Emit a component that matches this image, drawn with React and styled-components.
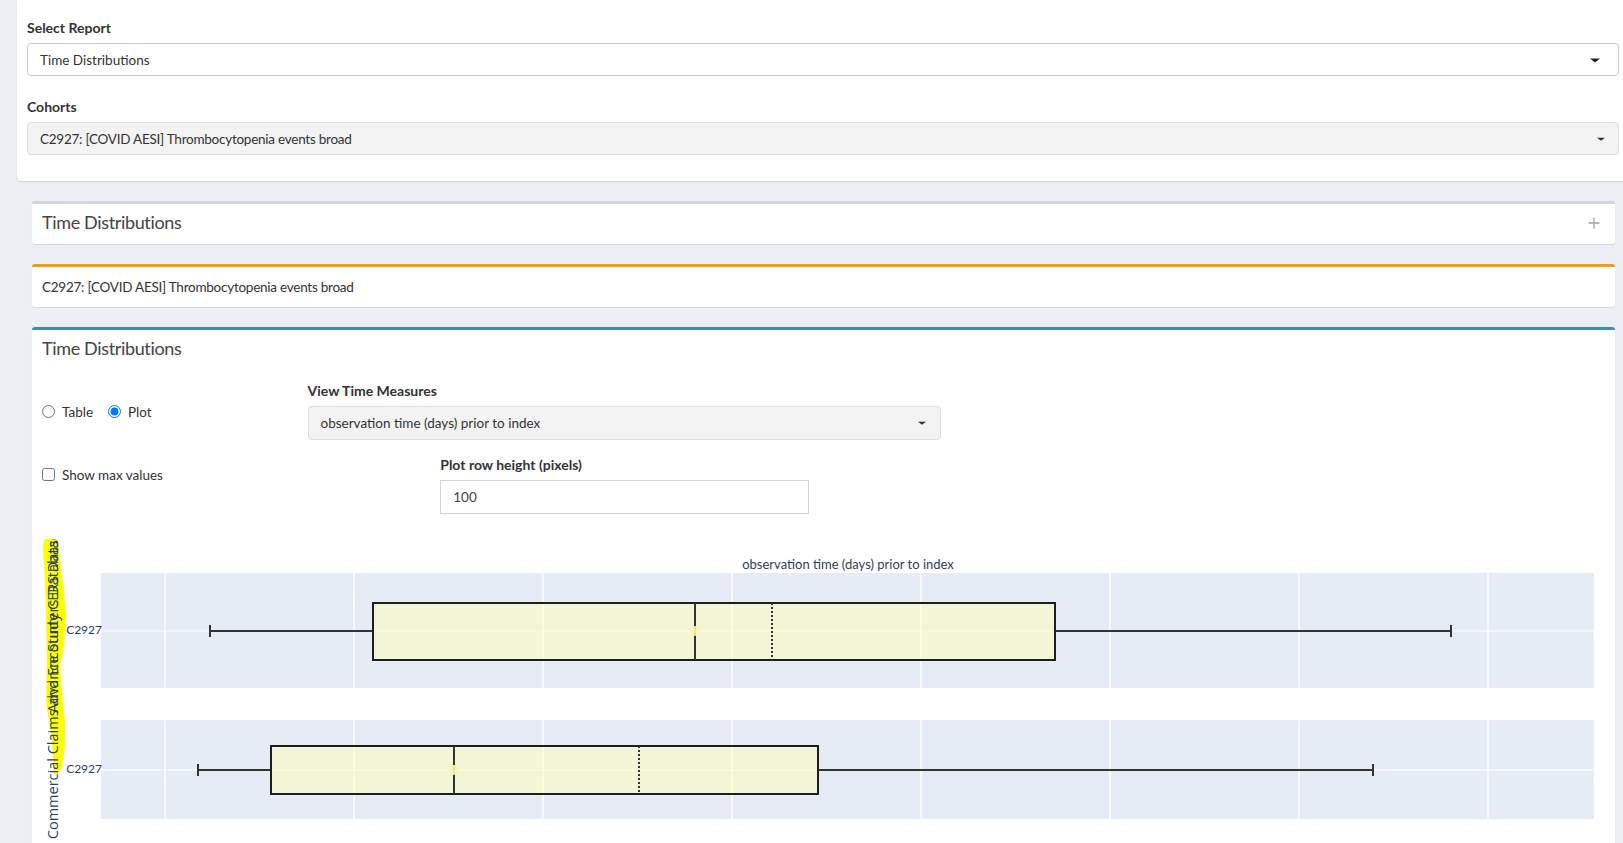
import React from 'react';
import styled, { createGlobalStyle } from 'styled-components';

const GlobalStyle = createGlobalStyle`
  html, body {
    margin: 0;
    padding: 0;
    background: #ecf0f5;
    font-family: Lato, "Source Sans Pro", "Liberation Sans", sans-serif;
    font-size: 13.5px;
    color: #333;
    overflow: hidden;
  }
  #root {
    height: 843px;
    overflow: hidden;
  }
  * { box-sizing: border-box; }
`;

const FilterPanel = styled.section`
  margin-left: 17px;
  padding: 18px 4px 26px 10px;
  background: #fff;
  border-bottom-left-radius: 4px;
  box-shadow: 0 1px 1px rgba(0, 0, 0, 0.12);
`;

const FormGroup = styled.div`
  margin-bottom: ${(p) => p.$gap ?? 0}px;
`;

const Label = styled.div`
  font-size: 14px;
  font-weight: 700;
  line-height: 20px;
  margin-bottom: 5px;
  color: #333;
`;

const SelectBox = styled.div`
  position: relative;
  display: flex;
  align-items: center;
  height: ${(p) => p.$height ?? 33}px;
  padding: 0 36px 0 12px;
  border: 1px solid ${(p) => (p.$filled ? '#dcdcdc' : '#cccccc')};
  border-radius: 4px;
  background: ${(p) => (p.$filled ? '#f3f3f3' : '#fff')};
  color: #333;
  white-space: nowrap;
`;

const CohortName = styled.span`
  letter-spacing: -0.25px;
`;

const Caret = styled.span`
  position: absolute;
  top: 50%;
  right: ${(p) => p.$right}px;
  width: 0;
  height: 0;
  transform: translateY(-40%);
  border-left: ${(p) => p.$size}px solid transparent;
  border-right: ${(p) => p.$size}px solid transparent;
  border-top: ${(p) => p.$size * 0.9}px solid ${(p) => p.$color || '#222'};
`;

const Content = styled.main`
  padding: 20px 8px 0 32px;
`;

const Box = styled.section`
  background: #fff;
  border-radius: 3px;
  border-top: 3px solid ${(p) => p.$accent};
  box-shadow: 0 1px 1px rgba(0, 0, 0, 0.1);
  margin-bottom: 20px;
`;

const BoxHeader = styled.header`
  display: flex;
  align-items: center;
  justify-content: space-between;
  padding: 9px 10px 11px;
`;

const BoxTitle = styled.h3`
  margin: 0;
  font-size: 18px;
  font-weight: 400;
  line-height: 1.1;
  letter-spacing: -0.35px;
  color: #444;
`;

const ToolButton = styled.span`
  display: inline-flex;
  padding: 0 5px;
  color: #97a0b3;
`;

const BoxBody = styled.div`
  padding: ${(p) => p.$top ?? 10}px 10px 10px;
  line-height: 20px;
`;

const ControlRow = styled.div`
  display: grid;
  grid-template-columns: repeat(12, 1fr);
  column-gap: 30px;
  margin-bottom: 15px;
`;

const Cell = styled.div`
  grid-column: ${(p) => p.$start} / span ${(p) => p.$span};
  padding-top: ${(p) => p.$top ?? 0}px;
`;

const OptionLine = styled.div`
  display: flex;
  align-items: center;
  height: 20px;
`;

const Option = styled.label`
  display: inline-flex;
  align-items: center;
  margin-right: 15px;
  color: #333;

  input {
    width: 13px;
    height: 13px;
    margin: 0 7px 0 0;
  }
`;

const NumberInput = styled.input`
  display: block;
  width: 100%;
  height: 34px;
  padding: 0 12px;
  border: 1px solid #d2d6de;
  font-family: inherit;
  font-size: 13.5px;
  color: #444;
  background: #fff;
  outline: none;
`;

const ChartFrame = styled.div`
  height: 315px;
`;

const PLOT_X = 59;
const PLOT_W = 1493;
const GRID = [123, 312, 501, 690, 879, 1068, 1257, 1446];

const rows = [
  { top: 44, height: 115, mid: 102, y0: 74, y1: 131, lo: 168, q1: 331, med: 653, mean: 730, q3: 1013, hi: 1409 },
  { top: 191, height: 99, mid: 241, y0: 217, y1: 265, lo: 156, q1: 229, med: 412, mean: 597, q3: 776, hi: 1331 },
];

// hand-drawn highlighter stroke over the y axis title
const highlight =
  'M5 9 L10 6 L14 12 L16 32 L20 62 L22 87 L20 117 L16 137 L18 162 L21 192 L21 217 L18 237 L14 244 L12 212 L6 172 L7 132 L6 92 L5 52 L3 17 Z';

const TimeChart = () => (
  <ChartFrame>
    <svg width="100%" height="315" viewBox="0 0 1563 315" preserveAspectRatio="xMinYMin meet">
      <defs>
        <clipPath id="ytitle">
          <rect x="0" y="10" width="40" height="305" />
        </clipPath>
      </defs>
      <text x="806" y="37" textAnchor="middle" dominantBaseline="middle" fontFamily="Lato, sans-serif" fontSize="13" fill="#2a3f5f">
        observation time (days) prior to index
      </text>
      {rows.map((r, i) => (
        <g key={i}>
          <rect x={PLOT_X} y={r.top} width={PLOT_W} height={r.height} fill="#e5ecf6" />
          {GRID.map((gx) => (
            <line key={gx} x1={gx} x2={gx} y1={r.top} y2={r.top + r.height} stroke="#fff" strokeWidth="1.5" />
          ))}
          <line x1={PLOT_X} x2={PLOT_X + PLOT_W} y1={r.mid} y2={r.mid} stroke="#fff" strokeWidth="1" />
          <text x="60" y={r.mid} textAnchor="end" dominantBaseline="middle" fontFamily="Lato, sans-serif" fontSize="12" fill="#2a3f5f">
            C2927
          </text>
          <line x1={r.lo} x2={r.q1} y1={r.mid} y2={r.mid} stroke="#333" strokeWidth="2" />
          <line x1={r.q3} x2={r.hi} y1={r.mid} y2={r.mid} stroke="#333" strokeWidth="2" />
          <line x1={r.lo} x2={r.lo} y1={r.mid - 6} y2={r.mid + 6} stroke="#333" strokeWidth="2" />
          <line x1={r.hi} x2={r.hi} y1={r.mid - 6} y2={r.mid + 6} stroke="#333" strokeWidth="2" />
          <rect x={r.q1} y={r.y0} width={r.q3 - r.q1} height={r.y1 - r.y0} fill="rgba(255,255,182,0.5)" stroke="#1e1e1e" strokeWidth="2" />
          <line x1={r.med} x2={r.med} y1={r.y0} y2={r.y1} stroke="#333" strokeWidth="2" />
          <line x1={r.mean} x2={r.mean} y1={r.y0} y2={r.y1} stroke="#333" strokeWidth="2" strokeDasharray="2 2" />
          <circle cx={r.med} cy={r.mid} r="5" fill="#f6f6b4" opacity="0.9" />
        </g>
      ))}
      <g clipPath="url(#ytitle)">
        <path d={highlight} fill="#ffff00" stroke="#ffff00" strokeWidth="4" strokeLinejoin="round" />
        <g fontFamily="'Open Sans', sans-serif" fontSize="14.5" fill="#2a3f5f">
          <text transform="translate(12 3) rotate(-90)" textAnchor="end" dominantBaseline="middle">
            IBM MarketScan Commercial Claims and Encounters Database
          </text>
          <text transform="translate(12 184) rotate(-90)" textAnchor="start" dominantBaseline="middle">
            Advance Study CERS Data
          </text>
        </g>
      </g>
    </svg>
  </ChartFrame>
);

const PlusIcon = () => (
  <svg width="12" height="12" viewBox="0 0 12 12">
    <path d="M6 0.5 V11.5 M0.5 6 H11.5" stroke="currentColor" strokeWidth="1.3" fill="none" />
  </svg>
);

const noop = () => {};

export default function App() {
  return (
    <>
      <GlobalStyle />
      <FilterPanel>
        <FormGroup $gap={21}>
          <Label>Select Report</Label>
          <SelectBox>
            Time Distributions
            <Caret $right={18} $size={5} />
          </SelectBox>
        </FormGroup>
        <FormGroup>
          <Label>Cohorts</Label>
          <SelectBox $filled>
            <CohortName>C2927: [COVID AESI] Thrombocytopenia events broad</CohortName>
            <Caret $right={13} $size={4} $color="#333" />
          </SelectBox>
        </FormGroup>
      </FilterPanel>

      <Content>
        <Box $accent="#d2d6de">
          <BoxHeader>
            <BoxTitle>Time Distributions</BoxTitle>
            <ToolButton>
              <PlusIcon />
            </ToolButton>
          </BoxHeader>
        </Box>

        <Box $accent="#f39c12">
          <BoxBody>
            <CohortName>C2927: [COVID AESI] Thrombocytopenia events broad</CohortName>
          </BoxBody>
        </Box>

        <Box $accent="#3c8dbc">
          <BoxHeader>
            <BoxTitle>Time Distributions</BoxTitle>
          </BoxHeader>
          <BoxBody $top={11}>
            <ControlRow>
              <Cell $start={1} $span={2} $top={21}>
                <OptionLine>
                  <Option>
                    <input type="radio" name="view" checked={false} onChange={noop} />
                    Table
                  </Option>
                  <Option>
                    <input type="radio" name="view" checked onChange={noop} />
                    Plot
                  </Option>
                </OptionLine>
              </Cell>
              <Cell $start={3} $span={5}>
                <Label>View Time Measures</Label>
                <SelectBox $filled $height={34}>
                  observation time (days) prior to index
                  <Caret $right={14} $size={4} $color="#333" />
                </SelectBox>
              </Cell>
            </ControlRow>
            <ControlRow>
              <Cell $start={1} $span={3} $top={10}>
                <OptionLine>
                  <Option>
                    <input type="checkbox" checked={false} onChange={noop} />
                    Show max values
                  </Option>
                </OptionLine>
              </Cell>
              <Cell $start={4} $span={3}>
                <Label>Plot row height (pixels)</Label>
                <NumberInput type="text" defaultValue="100" />
              </Cell>
            </ControlRow>
            <TimeChart />
          </BoxBody>
        </Box>
      </Content>
    </>
  );
}
